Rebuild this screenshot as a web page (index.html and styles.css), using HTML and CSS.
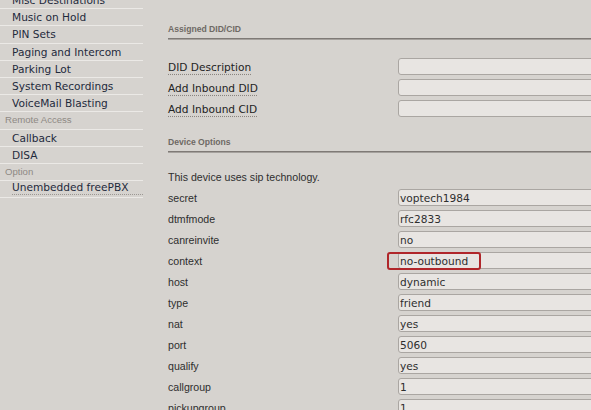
FILE: index.html
```html
<!DOCTYPE html>
<html>
<head>
<meta charset="utf-8">
<link rel="stylesheet" href="styles.css">
</head>
<body>
<div class="page">
  <nav class="sidebar">
    <div class="nav-item"><a>Misc Destinations</a></div>
    <div class="nav-item"><a>Music on Hold</a></div>
    <div class="nav-item"><a>PIN Sets</a></div>
    <div class="nav-item"><a>Paging and Intercom</a></div>
    <div class="nav-item"><a>Parking Lot</a></div>
    <div class="nav-item"><a>System Recordings</a></div>
    <div class="nav-item"><a>VoiceMail Blasting</a></div>
    <div class="nav-cat">Remote Access</div>
    <div class="nav-item"><a>Callback</a></div>
    <div class="nav-item"><a>DISA</a></div>
    <div class="nav-cat">Option</div>
    <div class="nav-item active"><a>Unembedded freePBX</a></div>
  </nav>
  <main class="content">
    <h2 class="section-head">Assigned DID/CID</h2>
    <div class="did-rows">
      <div class="row"><span class="label tip"><span>DID Description</span></span><span class="field"><span class="input"></span></span></div>
      <div class="row"><span class="label tip"><span>Add Inbound DID</span></span><span class="field"><span class="input"></span></span></div>
      <div class="row"><span class="label tip"><span>Add Inbound CID</span></span><span class="field"><span class="input"></span></span></div>
    </div>
    <h2 class="section-head second">Device Options</h2>
    <p class="note">This device uses sip technology.</p>
    <div class="dev-rows">
      <div class="row"><span class="label">secret</span><span class="field"><span class="input">voptech1984</span></span></div>
      <div class="row"><span class="label">dtmfmode</span><span class="field"><span class="input">rfc2833</span></span></div>
      <div class="row"><span class="label">canreinvite</span><span class="field"><span class="input">no</span></span></div>
      <div class="row"><span class="label">context</span><span class="field"><span class="input">no-outbound</span><span class="highlight"></span></span></div>
      <div class="row"><span class="label">host</span><span class="field"><span class="input">dynamic</span></span></div>
      <div class="row"><span class="label">type</span><span class="field"><span class="input">friend</span></span></div>
      <div class="row"><span class="label">nat</span><span class="field"><span class="input">yes</span></span></div>
      <div class="row"><span class="label">port</span><span class="field"><span class="input">5060</span></span></div>
      <div class="row"><span class="label">qualify</span><span class="field"><span class="input">yes</span></span></div>
      <div class="row"><span class="label">callgroup</span><span class="field"><span class="input">1</span></span></div>
      <div class="row"><span class="label">pickupgroup</span><span class="field"><span class="input">1</span></span></div>
    </div>
  </main>
</div>
</body>
</html>
```
FILE: styles.css
```css
html, body {
  margin: 0;
  padding: 0;
  background: #d6d3cf;
  overflow: hidden;
  height: 410px;
}
.page {
  display: flex;
  gap: 25px;
  align-items: flex-start;
}
.sidebar {
  width: 143px;
  flex: none;
  margin-top: -8px;
  font-family: "DejaVu Sans", Verdana, sans-serif;
  font-size: 10.6px;
}
.nav-item {
  padding-left: 12px;
  border-bottom: 1px solid #ebe9e6;
}
.nav-item a {
  display: block;
  line-height: 16.2px;
  color: #1e2a3c;
  white-space: nowrap;
}
.nav-item.active a {
  line-height: 12.6px;
  border-bottom: 1px dotted #9c9894;
  margin-bottom: 2.6px;
}
.nav-cat {
  padding-left: 5px;
  line-height: 16.2px;
  border-bottom: 1px solid #ebe9e6;
  font-family: "Liberation Sans", Arial, sans-serif;
  font-size: 9.6px;
  color: #8e8984;
}
.content {
  flex: 1;
  padding-top: 23px;
  min-width: 0;
}
.section-head {
  margin: 0;
  font-family: "Liberation Sans", Arial, sans-serif;
  font-weight: bold;
  font-size: 8.6px;
  line-height: 12px;
  color: #6e6964;
  padding-bottom: 3px;
  border-bottom: 1px solid #7f7a76;
  box-shadow: 0 1px 0 #a5a19d;
}
.section-head.second {
  margin-top: 17px;
}
.did-rows {
  margin-top: 17px;
}
.row {
  display: flex;
  align-items: center;
  height: 21px;
}
.label {
  width: 230px;
  flex: none;
  font-family: "Liberation Sans", Arial, sans-serif;
  font-size: 10.6px;
  color: #2e2e2e;
}
.label.tip {
  font-family: "DejaVu Sans", Verdana, sans-serif;
  color: #222;
}
.label.tip span {
  text-decoration: underline dotted #8a8580;
  text-underline-offset: 3px;
}
.field {
  position: relative;
  display: block;
  width: 240px;
  flex: none;
}
.input {
  display: block;
  box-sizing: border-box;
  height: 17px;
  border: 1px solid #aaa6a2;
  border-radius: 3px;
  background: #e8e5e2;
  padding: 0 1px;
  font-family: "DejaVu Sans", Verdana, sans-serif;
  font-size: 10.6px;
  line-height: 17px;
  color: #2e2e2e;
  overflow: hidden;
}
.note {
  margin: 18px 0 3px;
  font-family: "Liberation Sans", Arial, sans-serif;
  font-size: 10.6px;
  line-height: 14px;
  color: #2e2e2e;
}
.highlight {
  position: absolute;
  left: -11px;
  top: 0;
  width: 94px;
  height: 18px;
  box-sizing: border-box;
  border: 2px solid #b0262a;
  border-radius: 3px;
}
```
